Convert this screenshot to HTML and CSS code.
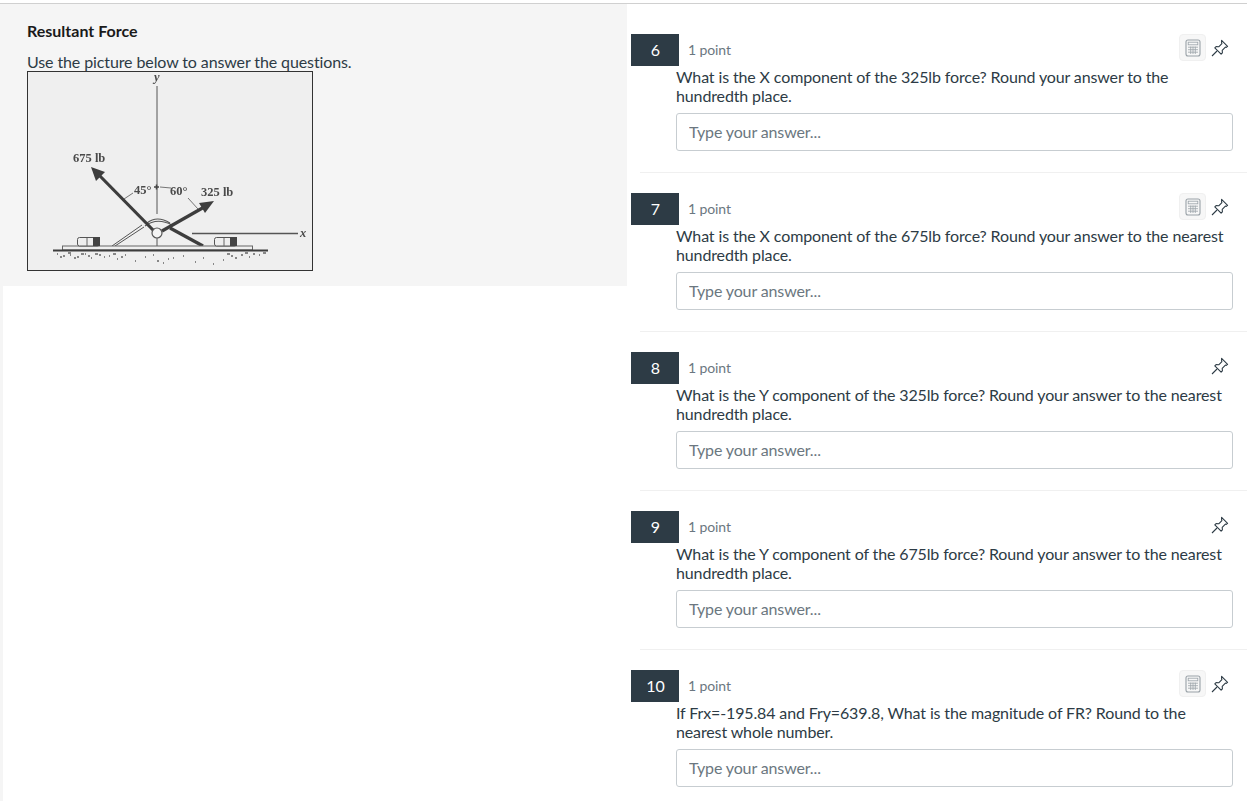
FILE: index.html
```html
<!DOCTYPE html>
<html lang="en">
<head>
  <meta charset="UTF-8" />
  <title>Quiz</title>
  <link rel="stylesheet" href="styles.css">
</head>
<body>
  <svg class="icon-defs" width="0" height="0" aria-hidden="true">
    <symbol id="calc" viewBox="0 0 16 18">
      <rect x="1" y="1" width="14" height="16" rx="2" fill="none" stroke="currentColor" stroke-width="1.1"/>
      <rect x="3.2" y="3.2" width="9.6" height="2.6" fill="none" stroke="currentColor" stroke-width=".8"/>
      <path d="M3 8.200h10M3 10.700h10M3 13.200h10M5.700 7.600v7.400M8 7.600v7.400M10.300 7.600v7.400" fill="none" stroke="currentColor" stroke-width=".8"/>
    </symbol>
    <symbol id="pin" viewBox="0 0 18 18">
      <path d="M10.600 1.400l6 6-1.300 1-.9-.3-3.200 3.200.2 2.600-1.300 1.300-6.300-6.300 1.300-1.300 2.600.2 3.200-3.200-.3-.9z" fill="none" stroke="currentColor" stroke-width="1.100" stroke-linejoin="round"/>
      <path d="M6 12L1 17" fill="none" stroke="currentColor" stroke-width="1.100"/>
    </symbol>
  </svg>

  <div class="page">
    <div class="left-col">
      <section class="stimulus">
        <h2>Resultant Force</h2>
        <p>Use the picture below to answer the questions.</p>
        <svg class="diagram" viewBox="0 0 284 198" width="286" height="200">
          <rect width="284" height="198" fill="#efefef"/>
          <g transform="translate(-1 -1)">
            <g stroke="#555" fill="none">
              <path d="M130 15V143" stroke-width="1"/>
              <path d="M165 162.500H271" stroke-width="1.500"/>
              <path d="M133 116L144 117" stroke-width=".8"/>
              <path d="M106 122L97 128M161 127L171 138" stroke-width=".8"/>
              <path d="M85 175L115 154M88 175L117 156" stroke-width="1"/>
              <path d="M120 152Q130 144 143 152M118 155Q130 146 145 154" stroke-width="1.100"/>
              <path d="M130 167V175" stroke-width="1"/>
            </g>
            <path d="M127 160L71 103" stroke="#3d3d3d" stroke-width="3.200"/>
            <path d="M143 157L176 175" stroke="#3d3d3d" stroke-width="3.200"/>
            <path d="M135 160L179 135" stroke="#3d3d3d" stroke-width="3.200"/>
            <path d="M64 96L78 101L69 110Z" fill="#3d3d3d"/>
            <path d="M187 130L172 132L178 142Z" fill="#3d3d3d"/>
            <circle cx="130" cy="162" r="5" fill="#f4f4f4" stroke="#555" stroke-width="1.200"/>
            <path d="M127 116h5M129.500 113.500v5" stroke="#444" stroke-width="1.500"/>
            <rect x="35.500" y="175" width="190" height="4" fill="#efefef" stroke="#666" stroke-width="1"/>
            <path d="M26 179.500H241" stroke="#3d3d3d" stroke-width="2"/>
            <g fill="#efefef" stroke="#555" stroke-width="1">
              <rect x="50.500" y="166.500" width="22" height="8.500" rx="2"/>
              <rect x="187.500" y="166.500" width="22" height="8.500" rx="2"/>
            </g>
            <path d="M60 167V175M197 167V175" stroke="#666" stroke-width="1"/>
            <rect x="66" y="166" width="7" height="9" fill="#444"/>
            <rect x="203" y="166" width="7" height="9" fill="#444"/>
            <path d="M30 183h1M33 186h2M36 185h2M41 182h3M43 184h1M47 187h2M50 186h2M54 183h3M58 183h1M61 185h2M64 187h1M68 183h3M72 184h2M77 186h1M82 185h1M86 183h3M90 188h1M94 186h2M98 184h1M108 190h1M118 186h1M126 184h1M130 190h2M136 192h1M141 188h1M146 187h1M156 185h1M168 191h1M176 187h1M186 193h1M196 189h1M200 183h3M204 185h2M208 187h2M214 184h2M218 182h3M222 186h1M226 183h2M232 184h1M236 182h3" stroke="#666" stroke-width="1.300" fill="none"/>
            <g class="labels">
              <text x="127" y="10" font-style="italic">y</text>
              <text x="46" y="91">675 lb</text>
              <text x="107" y="123">45°</text>
              <text x="143" y="124">60°</text>
              <text x="174" y="125">325 lb</text>
              <text x="273" y="166" font-style="italic">x</text>
            </g>
          </g>
        </svg>
      </section>
    </div>

    <main class="questions">
      <div class="question">
        <div class="q-head">
          <span class="q-num">6</span>
          <span class="q-points">1 point</span>
          <span class="q-tools">
            <span class="calc-btn"><svg width="16" height="18"><use href="#calc"/></svg></span>
            <svg class="pin" width="18" height="18"><use href="#pin"/></svg>
          </span>
        </div>
        <p class="q-text">What is the X component of the 325lb force? Round your answer to the hundredth place.</p>
        <input class="q-input" type="text" placeholder="Type your answer...">
      </div>

      <div class="question">
        <div class="q-head">
          <span class="q-num">7</span>
          <span class="q-points">1 point</span>
          <span class="q-tools">
            <span class="calc-btn"><svg width="16" height="18"><use href="#calc"/></svg></span>
            <svg class="pin" width="18" height="18"><use href="#pin"/></svg>
          </span>
        </div>
        <p class="q-text">What is the X component of the 675lb force? Round your answer to the nearest hundredth place.</p>
        <input class="q-input" type="text" placeholder="Type your answer...">
      </div>

      <div class="question">
        <div class="q-head">
          <span class="q-num">8</span>
          <span class="q-points">1 point</span>
          <span class="q-tools">
            <svg class="pin" width="18" height="18"><use href="#pin"/></svg>
          </span>
        </div>
        <p class="q-text">What is the Y component of the 325lb force? Round your answer to the nearest hundredth place.</p>
        <input class="q-input" type="text" placeholder="Type your answer...">
      </div>

      <div class="question">
        <div class="q-head">
          <span class="q-num">9</span>
          <span class="q-points">1 point</span>
          <span class="q-tools">
            <svg class="pin" width="18" height="18"><use href="#pin"/></svg>
          </span>
        </div>
        <p class="q-text">What is the Y component of the 675lb force? Round your answer to the nearest hundredth place.</p>
        <input class="q-input" type="text" placeholder="Type your answer...">
      </div>

      <div class="question">
        <div class="q-head">
          <span class="q-num">10</span>
          <span class="q-points">1 point</span>
          <span class="q-tools">
            <span class="calc-btn"><svg width="16" height="18"><use href="#calc"/></svg></span>
            <svg class="pin" width="18" height="18"><use href="#pin"/></svg>
          </span>
        </div>
        <p class="q-text">If Frx=-195.84 and Fry=639.8, What is the magnitude of FR? Round to the nearest whole number.</p>
        <input class="q-input" type="text" placeholder="Type your answer...">
      </div>
    </main>
  </div>
</body>
</html>
```

FILE: styles.css
```css
* {
  box-sizing: border-box;
  margin: 0;
  padding: 0;
}

html, body {
  height: 100%;
  overflow: hidden;
}

body {
  font-family: 'Lato', sans-serif;
  font-size: 16px;
  color: #2d3b45;
  background: #fff;
  padding-top: 3px;
}

.icon-defs {
  display: block;
  height: 0;
}

.page {
  display: flex;
  height: 798px;
  border-top: 1px solid #d0d0d0;
}

.left-col {
  width: 627px;
  flex: none;
  border-left: 3px solid #f5f5f5;
}

.stimulus {
  height: 282px;
  background: #f5f5f5;
  padding: 17px 24px 0;
}

.stimulus h2 {
  font-size: 16px;
  font-weight: 700;
  line-height: 19px;
  color: #1a1a1a;
  margin-bottom: 12px;
}

.stimulus p {
  line-height: 19px;
  height: 19px;
  letter-spacing: -0.11px;
}

.diagram {
  display: block;
  border: 1px solid #333;
  filter: blur(.4px);
}

.labels text {
  font-family: 'Liberation Serif', serif;
  font-size: 12.500px;
  font-weight: 700;
  fill: #4a4a4a;
}

/* question list */
.questions {
  flex: 1;
  padding-top: 30px;
}

.question {
  position: relative;
  height: 159px;
  padding-left: 4px;
}

.question::after {
  content: '';
  position: absolute;
  left: 13px;
  right: 0;
  bottom: 20px;
  border-bottom: 1px solid #f0f0f0;
}

.question:last-child::after {
  display: none;
}

.q-head {
  display: flex;
  align-items: center;
  height: 32px;
}

.q-num {
  width: 48px;
  height: 32px;
  padding-left: 1px;
  line-height: 32px;
  text-align: center;
  background: #2d3b45;
  color: #fff;
}

.q-points {
  margin-left: 9px;
  padding-bottom: 2px;
  font-size: 14px;
  letter-spacing: -0.1px;
  color: #6b7780;
}

.q-tools {
  margin-left: auto;
  margin-right: 18px;
  align-self: flex-start;
  display: flex;
  align-items: flex-start;
  gap: 5px;
}

.calc-btn {
  display: flex;
  align-items: center;
  justify-content: center;
  width: 27px;
  height: 27px;
  background: #f7f7f7;
  border: 1px solid #f0f0f0;
  border-radius: 4px;
  color: #9aa2a8;
}

.pin {
  display: block;
  margin-top: 5px;
  color: #2d3b45;
}

.q-text {
  margin: 1px 14px 0 45px;
  line-height: 19px;
  letter-spacing: -0.13px;
}

.q-input {
  display: block;
  width: 557px;
  height: 38px;
  margin: 8px 0 0 45px;
  padding: 0 12px 2px;
  font-family: 'Lato', sans-serif;
  font-size: 16px;
  letter-spacing: -0.13px;
  color: #2d3b45;
  background: #fff;
  border: 1px solid #c7cdd1;
  border-radius: 3px;
}

.q-input::placeholder {
  color: #6b7780;
  opacity: 1;
}
```
